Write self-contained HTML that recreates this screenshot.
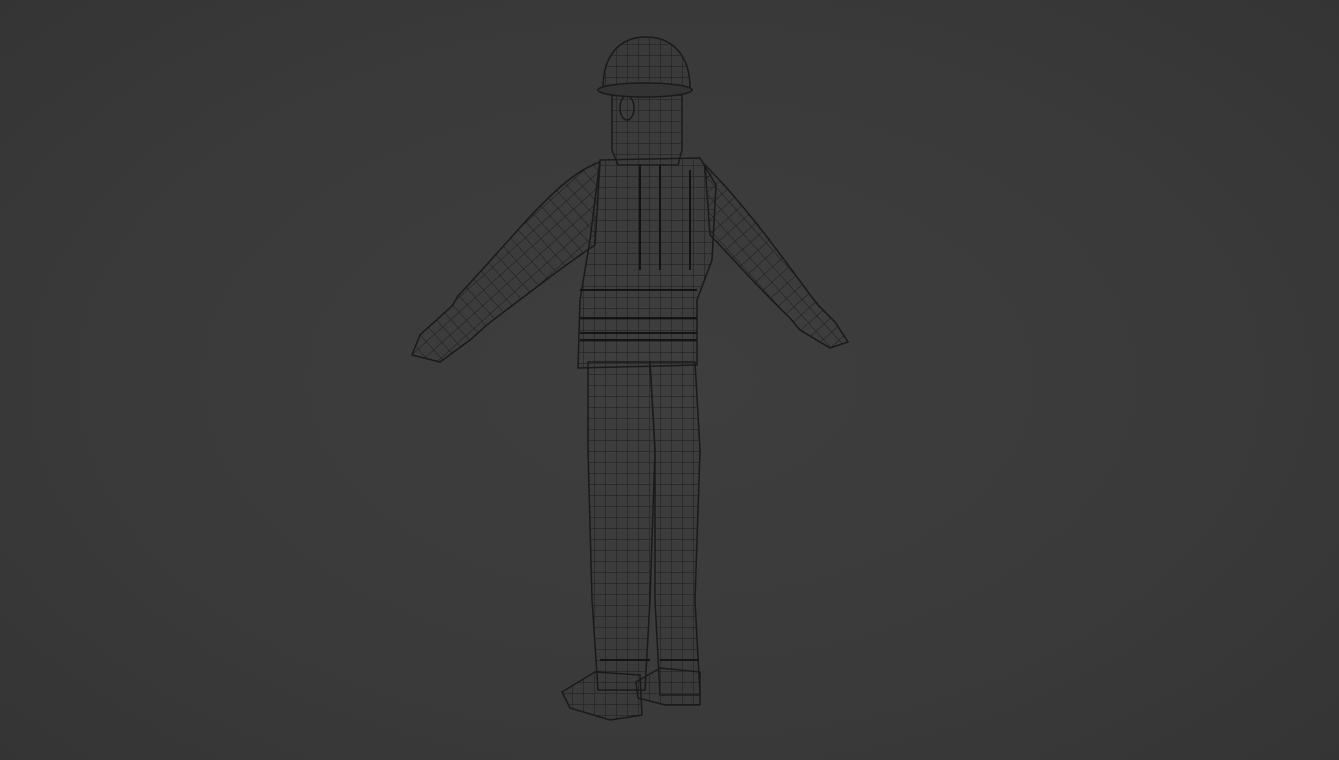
<!DOCTYPE html>
<html><head><style>
html,body{margin:0;padding:0;width:1339px;height:760px;overflow:hidden}
body{background:radial-gradient(ellipse 75% 80% at 50% 50%,#3e3e3e 0%,#3a3a3a 55%,#333 100%)}
svg{position:absolute;left:0;top:0}
</style></head><body>
<svg width="1339" height="760" viewBox="0 0 1339 760">
<defs>
<pattern id="g" width="11" height="11" patternUnits="userSpaceOnUse">
<path d="M0 0H11M0 0V11" stroke="#1c1c1c" stroke-width="1" fill="none"/>
</pattern>
<pattern id="ga" width="11" height="11" patternUnits="userSpaceOnUse" patternTransform="rotate(-42)">
<path d="M0 0H11M0 0V11" stroke="#1c1c1c" stroke-width="1" fill="none"/>
</pattern>
<pattern id="gb" width="11" height="11" patternUnits="userSpaceOnUse" patternTransform="rotate(48)">
<path d="M0 0H11M0 0V11" stroke="#1c1c1c" stroke-width="1" fill="none"/>
</pattern>
</defs>
<g stroke="#1a1a1a" stroke-width="1.5">
<path d="M600 162 C560 175 520 230 458 296 L452 306 L420 335 L412 355 L440 362 L470 340 L488 324 C530 292 565 265 595 245 Z" fill="url(#ga)"/>
<path d="M705 165 C740 200 770 240 808 292 L818 305 L835 322 L848 342 L830 348 L800 330 L790 318 C760 290 730 255 710 235 Z" fill="url(#gb)"/>
<path d="M588 362 L650 362 L655 450 L650 600 L645 690 L598 690 L592 600 L588 450 Z" fill="url(#g)"/>
<path d="M650 362 L695 362 L700 450 L695 600 L700 695 L660 695 L655 600 L655 450 Z" fill="url(#g)"/>
<path d="M595 672 L640 675 L642 715 L610 720 L570 708 L562 692 Z" fill="url(#g)"/>
<path d="M660 668 L700 672 L700 705 L665 705 L638 698 L636 682 Z" fill="url(#g)"/>
<path d="M600 160 L700 158 L716 185 L712 260 L697 300 L697 365 L578 368 L580 300 L590 240 Z" fill="url(#g)"/>
<path d="M612 95 L682 95 L682 150 L678 165 L618 165 L612 150 Z" fill="url(#g)"/>
<ellipse cx="627" cy="108" rx="7" ry="12" fill="none"/>
<path d="M603 88 C603 55 620 37 646 37 C672 37 690 55 690 88 Z" fill="url(#g)"/>
<ellipse cx="645" cy="90" rx="47" ry="7" fill="#333"/>
</g>
<g stroke="#141414" stroke-width="2" fill="none">
<path d="M580 290 H697 M580 318 H697 M580 333 H697 M580 340 H697"/>
<path d="M640 165 V270 M660 165 V270 M690 170 V270"/>
<path d="M600 660 H650 M660 660 H698"/>
</g>
</svg>
</body></html>
